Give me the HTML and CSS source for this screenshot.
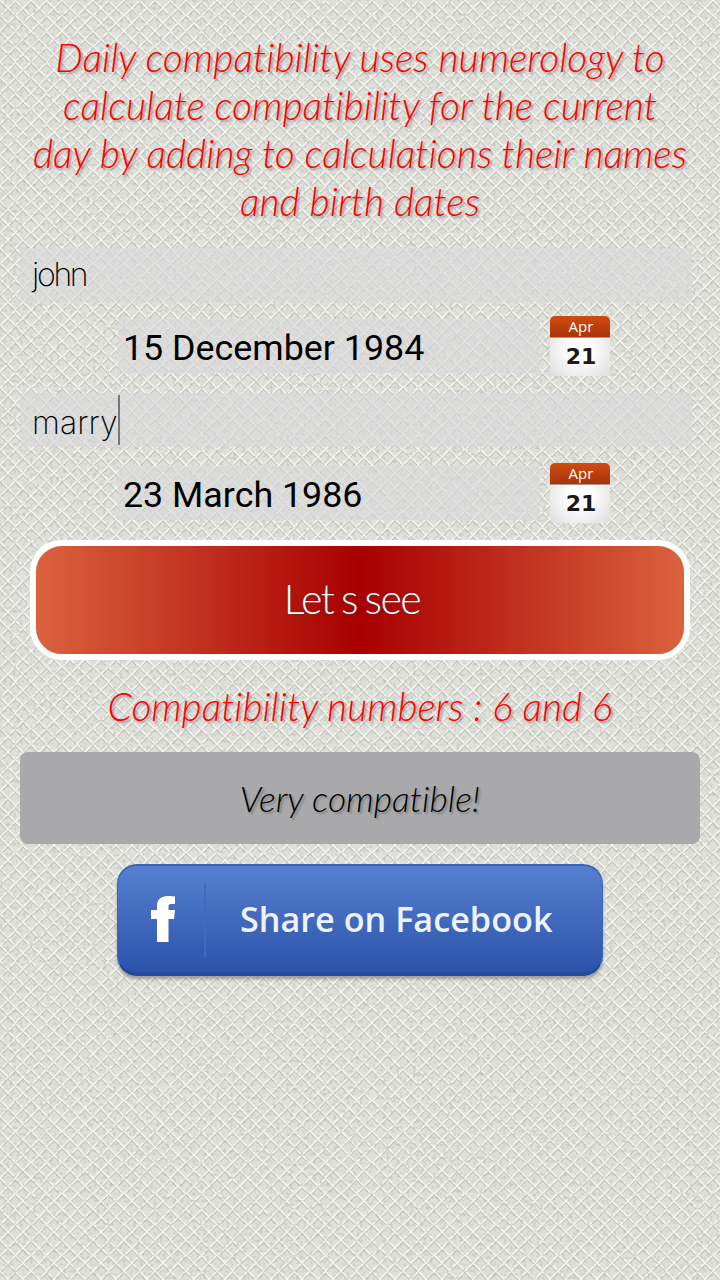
FILE: index.html
```html
<!DOCTYPE html>
<html lang="en">
<head>
<meta charset="utf-8">
<title>Daily compatibility</title>
<link rel="stylesheet" href="styles.css">
</head>
<body>
<main class="page">
  <p class="intro">Daily compatibility uses numerology to calculate compatibility for the current day by adding to calculations their names and birth dates</p>

  <div class="name-field"><span class="name-text name-john">john</span></div>
  <div class="date-row">
    <div class="date-field">15 December 1984</div>
    <div class="cal"><div class="cal-top">Apr</div><div class="cal-day">21</div></div>
  </div>
  <div class="name-field name-field-2"><span class="name-text name-marry">marry</span><span class="caret"></span></div>
  <div class="date-row date-row-2">
    <div class="date-field">23 March 1986</div>
    <div class="cal"><div class="cal-top">Apr</div><div class="cal-day">21</div></div>
  </div>

  <button class="see-btn">Let s see</button>

  <p class="numbers">Compatibility numbers : 6 and 6</p>
  <div class="verdict">Very compatible!</div>

  <div class="fb">
    <svg class="fb-f" viewBox="0 0 24 46" width="24" height="46" aria-hidden="true">
      <path d="M6 46V23H0v-9h6V10C6 3.500 10 0 17 0c3 0 6 .3 7 .4V8h-4c-2 0-2.500 1-2.500 3v3H24l-1 9h-5.500v23z" fill="#fff"/>
    </svg>
    <span class="fb-sep"></span>
    <span class="fb-label">Share on Facebook</span>
  </div>
</main>
</body>
</html>
```
FILE: styles.css
```css
* { box-sizing: border-box; }
html, body { margin: 0; padding: 0; }
body {
  width: 720px;
  height: 1280px;
  overflow: hidden;
  background-color: #e1e1dc;
  background-image:
    url("data:image/svg+xml,%3Csvg xmlns='http://www.w3.org/2000/svg' width='400' height='400'%3E%3Cfilter id='n' x='0' y='0' width='100%25' height='100%25'%3E%3CfeTurbulence type='fractalNoise' baseFrequency='.3' numOctaves='3' stitchTiles='stitch'/%3E%3CfeColorMatrix values='0 0 0 0 .45 0 0 0 0 .45 0 0 0 0 .42 0 0 0 1.5 -.72'/%3E%3C/filter%3E%3Crect width='400' height='400' filter='url(%23n)'/%3E%3C/svg%3E"),
    url("data:image/svg+xml,%3Csvg xmlns='http://www.w3.org/2000/svg' width='15.5' height='15.5' viewBox='0 0 16 16'%3E%3Cpath d='M-4 -2L20 22M10 -4L30 16M-2 20L22 -4M-4 6L6 -4' stroke='%23908f86' stroke-opacity='.32' stroke-width='1.1' fill='none'/%3E%3Cpath d='M-4 -4L20 20M20 -4L-4 20M12 -4L20 4M-4 12L4 20M4 -4L-4 4M20 12L12 20' stroke='%23f6f6f2' stroke-opacity='.95' stroke-width='1.5' fill='none'/%3E%3C/svg%3E");
}
.page { padding: 33px 0 0; display: flex; flex-direction: column; }
.intro {
  margin: 0 auto;
  width: 656px;
  text-align: center;
  font: italic 300 39px/48px Lato, sans-serif;
  font-variant-ligatures: none;
  color: #f00;
  text-shadow: 2px 2px 2px rgba(70,70,70,.4);
}
.name-field {
  margin: 23px 28px 0 20px;
  height: 54px;
  background: rgba(216,216,218,.62);
  padding-left: 12px;
  display: flex;
  align-items: center;
  font: 200 32px/54px Inter, sans-serif;
  color: #000;
}
.name-field-2 { margin-top: 17px; }
.name-john { letter-spacing: -2.3px; }
.name-marry { letter-spacing: .1px; padding-top: 6px; }
.caret { width: 2px; height: 50px; background: #777; }
.date-row { display: flex; align-items: center; height: 60px; margin-top: 14px; }
.date-row-2 { margin-top: 16px; }
.date-field {
  margin-left: 118px;
  width: 422px;
  height: 54px;
  padding-left: 5px;
  background: rgba(216,216,218,.62);
  font: 400 35.8px/59px Roboto, sans-serif;
  color: #000;
}
.cal {
  margin-left: 10px;
  width: 60px;
  height: 60px;
  padding-left: 2px;
  border-radius: 5px;
  overflow: hidden;
  background: radial-gradient(circle at 50% 55%, #fff 25%, #d8d8d8 100%);
  text-align: center;
}
.cal-top {
  height: 22px;
  margin-left: -2px;
  padding-left: 2px;
  background: linear-gradient(#cf4c10, #a8340a);
  border-bottom: 1px solid #a99;
  font: 400 15px/20px "Open Sans", sans-serif;
  color: #fff;
}
.cal-day { font: 700 22px/38px "DejaVu Sans", sans-serif; color: #1a1a1a; }
.see-btn {
  margin: 17px 30px 0;
  width: 660px;
  height: 120px;
  padding: 0 16px 4px 0;
  border: 6px solid #fff;
  border-radius: 32px;
  background: linear-gradient(90deg, #db623f 0%, #a80000 50%, #db623f 100%);
  font: 300 41px/1 Lato, sans-serif;
  letter-spacing: -1.5px;
  word-spacing: -2px;
  color: #fff;
  text-shadow: 1px 1px 2px rgba(60,60,60,.6);
}
.numbers {
  margin: 22px 0 0;
  text-align: center;
  font: italic 300 38.8px/48px Lato, sans-serif;
  font-variant-ligatures: none;
  color: #f00;
  text-shadow: 2px 2px 2px rgba(70,70,70,.4);
}
.verdict {
  margin: 22px 20px 0;
  height: 92px;
  border-radius: 8px;
  background: #a9a9ab;
  text-align: center;
  font: italic 300 35.5px/94px Lato, sans-serif;
  font-variant-ligatures: none;
  color: #000;
  text-shadow: 2px 2px 2px rgba(70,70,70,.4);
}
.fb {
  margin: 20px 0 0 117px;
  width: 486px;
  height: 112px;
  border-radius: 20px;
  border: 1px solid #3a63b8;
  border-top: 2px solid #3a63b8;
  border-bottom: 4px solid #234a9c;
  background: linear-gradient(#5680cf, #2c53ab);
  box-shadow: 0 3px 3px rgba(80,80,80,.45);
  display: flex;
  align-items: center;
}
.fb-f { margin-left: 33px; flex: none; }
.fb-sep { margin: 2px 0 0 29px; width: 2px; height: 74px; background: #4169bd; flex: none; }
.fb-label { margin-left: 34px; font: 600 34.2px/1 "Open Sans", sans-serif; color: #eef2fb; }
```
